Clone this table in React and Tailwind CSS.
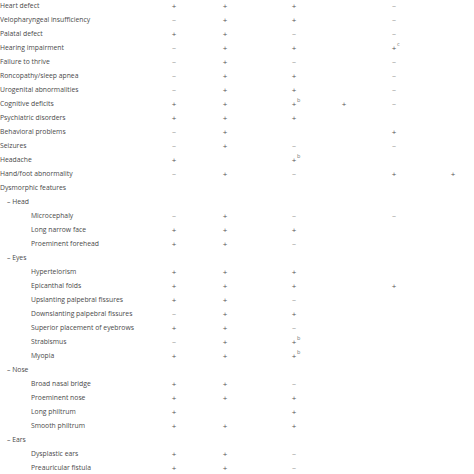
const rows = [
  { label: "Heart defect", lvl: 0, v: ["+", "+", "+", "", "–", ""] },
  { label: "Velopharyngeal insufficiency", lvl: 0, v: ["–", "+", "+", "", "–", ""] },
  { label: "Palatal defect", lvl: 0, v: ["+", "+", "–", "", "–", ""] },
  { label: "Hearing impairment", lvl: 0, v: ["–", "+", "+", "", "+c", ""] },
  { label: "Failure to thrive", lvl: 0, v: ["–", "+", "–", "", "–", ""] },
  { label: "Roncopathy/sleep apnea", lvl: 0, v: ["–", "+", "+", "", "–", ""] },
  { label: "Urogenital abnormalities", lvl: 0, v: ["–", "+", "+", "", "–", ""] },
  { label: "Cognitive deficits", lvl: 0, v: ["+", "+", "+b", "+", "–", ""] },
  { label: "Psychiatric disorders", lvl: 0, v: ["+", "+", "+", "", "", ""] },
  { label: "Behavioral problems", lvl: 0, v: ["–", "+", "", "", "+", ""] },
  { label: "Seizures", lvl: 0, v: ["–", "+", "–", "", "–", ""] },
  { label: "Headache", lvl: 0, v: ["+", "", "+b", "", "", ""] },
  { label: "Hand/foot abnormality", lvl: 0, v: ["–", "+", "–", "", "+", "+"] },
  { label: "Dysmorphic features", lvl: 0, v: [] },
  { label: "Head", lvl: 1, v: [] },
  { label: "Microcephaly", lvl: 2, v: ["–", "+", "–", "", "–", ""] },
  { label: "Long narrow face", lvl: 2, v: ["+", "+", "+", "", "", ""] },
  { label: "Proeminent forehead", lvl: 2, v: ["+", "+", "–", "", "", ""] },
  { label: "Eyes", lvl: 1, v: [] },
  { label: "Hypertelorism", lvl: 2, v: ["+", "+", "+", "", "", ""] },
  { label: "Epicanthal folds", lvl: 2, v: ["+", "+", "+", "", "+", ""] },
  { label: "Upslanting palpebral fissures", lvl: 2, v: ["+", "+", "–", "", "", ""] },
  { label: "Downslanting palpebral fissures", lvl: 2, v: ["–", "+", "+", "", "", ""] },
  { label: "Superior placement of eyebrows", lvl: 2, v: ["+", "+", "–", "", "", ""] },
  { label: "Strabismus", lvl: 2, v: ["–", "+", "+b", "", "", ""] },
  { label: "Myopia", lvl: 2, v: ["+", "+", "+b", "", "", ""] },
  { label: "Nose", lvl: 1, v: [] },
  { label: "Broad nasal bridge", lvl: 2, v: ["+", "+", "–", "", "", ""] },
  { label: "Proeminent nose", lvl: 2, v: ["+", "+", "+", "", "", ""] },
  { label: "Long philtrum", lvl: 2, v: ["+", "", "+", "", "", ""] },
  { label: "Smooth philtrum", lvl: 2, v: ["+", "+", "+", "", "", ""] },
  { label: "Ears", lvl: 1, v: [] },
  { label: "Dysplastic ears", lvl: 2, v: ["+", "+", "–", "", "", ""] },
  { label: "Preauricular fistula", lvl: 2, v: ["+", "+", "–", "", "", ""] },
];

function Mark({ value }) {
  if (!value) return <span />
  const sign = value[0]
  const sup = value.slice(1)
  return (
    <span className="relative flex justify-center items-center text-[8px] leading-none">
      {sign === "+" ? (
        <span className="text-[#555]">+</span>
      ) : (
        <span className="text-[#999] -translate-y-[1.5px]">–</span>
      )}
      {sup && (
        <span className="absolute left-[calc(50%+3px)] -top-[2px] text-[5.5px] text-[#777]">{sup}</span>
      )}
    </span>
  )
}

export default function App() {
  return (
    <div
      className="w-[474px] h-[474px] overflow-hidden bg-white text-[#4a4a4a] mt-[-1px]"
      style={{ fontFamily: '"Open Sans", "Noto Sans", sans-serif' }}
    >
      {rows.map((r, i) => (
        <div
          key={i}
          className="grid grid-cols-[148px_52px_50px_88px_12px_88px_30px] h-[14px] items-center text-[6.8px] leading-none"
        >
          <div className="whitespace-nowrap">
            {r.lvl === 1 && <span className="pl-[7px]">– {r.label}</span>}
            {r.lvl === 2 && <span className="pl-[31px]">{r.label}</span>}
            {r.lvl === 0 && <span>{r.label}</span>}
          </div>
          {[0, 1, 2, 3, 4, 5].map((c) => (
            <Mark key={c} value={r.v[c]} />
          ))}
        </div>
      ))}
    </div>
  )
}
